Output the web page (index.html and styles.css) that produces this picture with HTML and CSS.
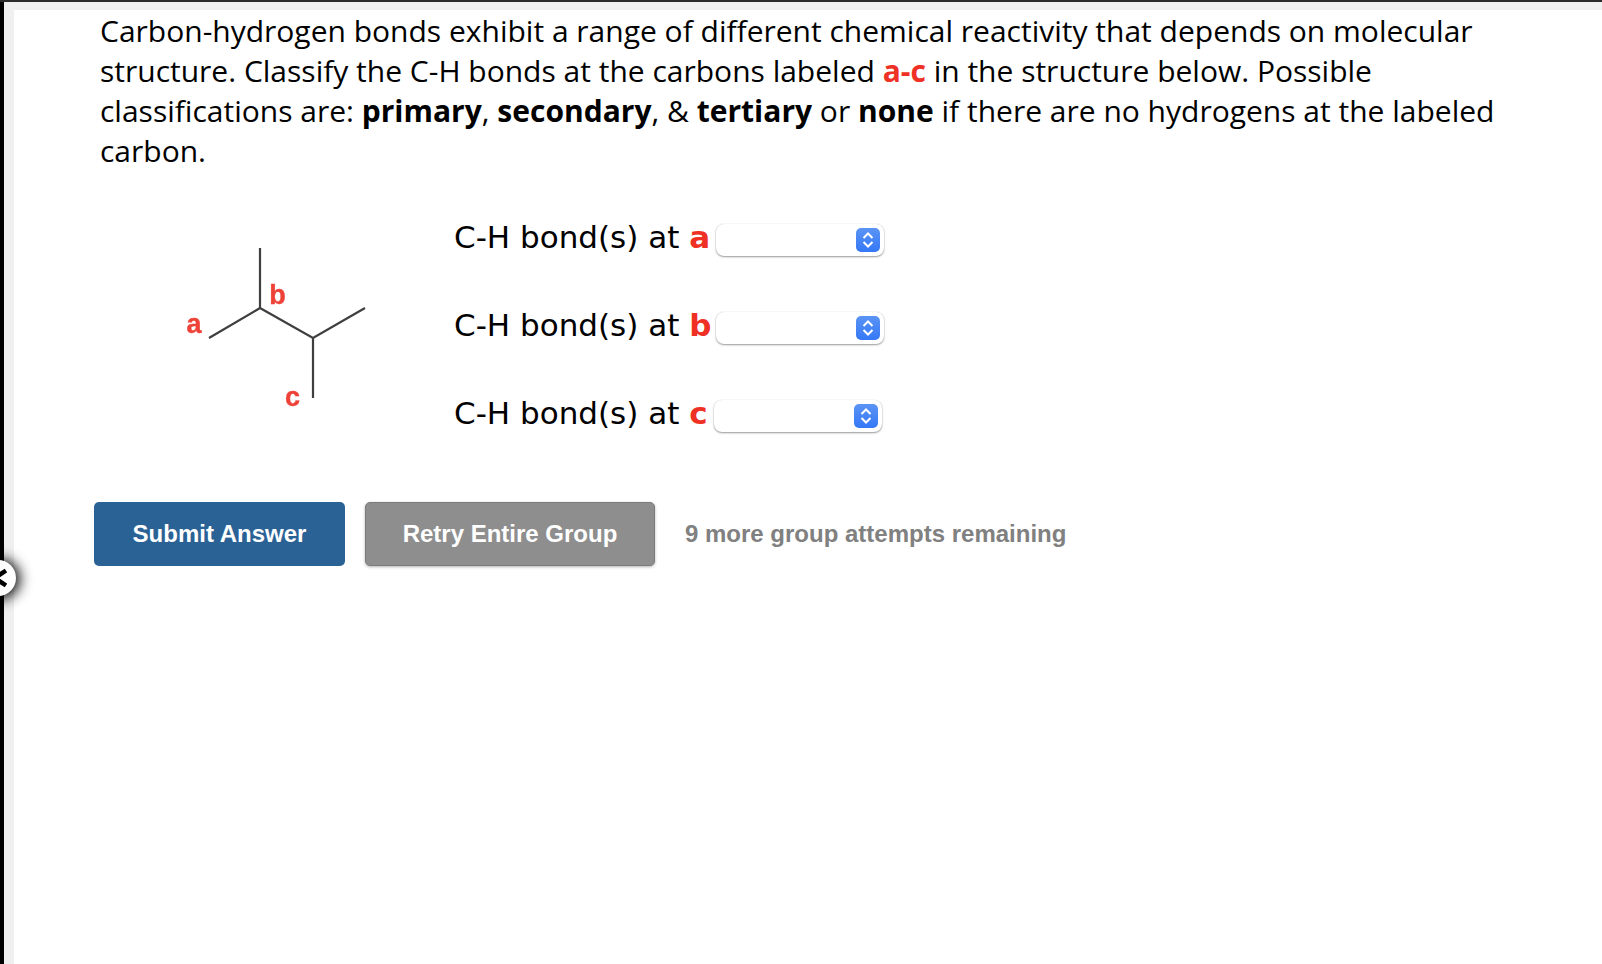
FILE: index.html
```html
<!DOCTYPE html>
<html lang="en">
<head>
<meta charset="utf-8">
<title>C-H bond classification</title>
<link rel="stylesheet" href="styles.css">
</head>
<body>
<div class="topbar"></div>
<div class="shell">
  <div class="rail">
    <div class="handle" aria-hidden="true">
      <svg class="handle-icon" width="14" height="20" viewBox="0 0 14 20"><path d="M13 2.5 L2 10 L13 17.5" fill="none" stroke="#000" stroke-width="4.5"/></svg>
    </div>
  </div>
  <div class="gutter"></div>
  <main class="page">
    <p class="question">Carbon-hydrogen bonds exhibit a range of different chemical reactivity that depends on molecular structure. Classify the C-H bonds at the carbons labeled <b class="red">a-c</b> in the structure below. Possible classifications are: <b>primary</b>, <b>secondary</b>, &amp; <b>tertiary</b> or <b>none</b> if there are no hydrogens at the labeled carbon.</p>
    <div class="problem">
      <svg class="molecule" width="240" height="210" viewBox="0 0 240 210">
        <path d="M49 128 L100 98 L100 38 M100 98 L153 128 L205 98 M153 128 L153 188" fill="none" stroke="#3f3f3f" stroke-width="2.2"/>
        <text class="mol-label" x="34" y="123" text-anchor="middle">a</text>
        <text class="mol-label" x="117.5" y="94" text-anchor="middle">b</text>
        <text class="mol-label" x="132.5" y="196" text-anchor="middle">c</text>
      </svg>
      <div class="answers">
        <div class="answer"><span class="answer-label">C-H bond(s) at <b class="red">a</b></span><span class="select"><span class="stepper"><svg width="12" height="18" viewBox="0 0 12 18"><path d="M1.5 7 L6 2.5 L10.5 7 M1.5 11 L6 15.5 L10.5 11" fill="none" stroke="#fff" stroke-width="2"/></svg></span></span></div>
        <div class="answer"><span class="answer-label label-b">C-H bond(s) at <b class="red">b</b></span><span class="select"><span class="stepper"><svg width="12" height="18" viewBox="0 0 12 18"><path d="M1.5 7 L6 2.5 L10.5 7 M1.5 11 L6 15.5 L10.5 11" fill="none" stroke="#fff" stroke-width="2"/></svg></span></span></div>
        <div class="answer"><span class="answer-label">C-H bond(s) at <b class="red">c</b></span><span class="select"><span class="stepper"><svg width="12" height="18" viewBox="0 0 12 18"><path d="M1.5 7 L6 2.5 L10.5 7 M1.5 11 L6 15.5 L10.5 11" fill="none" stroke="#fff" stroke-width="2"/></svg></span></span></div>
      </div>
    </div>
    <div class="actions">
      <button class="btn submit" type="button">Submit Answer</button>
      <button class="btn retry" type="button">Retry Entire Group</button>
      <span class="attempts">9 more group attempts remaining</span>
    </div>
  </main>
</div>
</body>
</html>
```
FILE: styles.css
```css
* { box-sizing: border-box; }
html, body { margin: 0; height: 100%; overflow: hidden; background: #fff; }
body { display: flex; flex-direction: column; }
.topbar { height: 2px; background: #2b2b2b; flex: none; }
.shell { display: flex; flex: 1; min-height: 0; }
.rail { width: 4px; background: #000; position: relative; flex: none; }
.handle { position: absolute; left: -20px; top: 558px; width: 36px; height: 36px; border-radius: 50%; background: #fff; box-shadow: 2px 1px 13px 2px rgba(0,0,0,.95); display: flex; align-items: center; justify-content: flex-end; padding-right: 9px; z-index: 2; }
.gutter { width: 10px; background: #f0f0f0; flex: none; }
.page { flex: 1; border-top: 8px solid #f0f0f0; padding: 1px 0 0 86px; min-width: 0; }
.question { margin: 0; width: 1400px; font: 30px/40px "Open Sans", sans-serif; color: #000; }
.question b { font-weight: 700; }
.red { color: #ee3124; font-weight: 700; }
.problem { display: flex; margin-top: 39px; }
.molecule { flex: none; margin-left: 60px; filter: blur(.4px); }
.mol-label { font: 700 27px "Liberation Sans", sans-serif; fill: #ee4238; stroke: #ee4238; stroke-width: .4px; }
.answers { display: flex; flex-direction: column; gap: 52px; margin-left: 54px; margin-top: 9px; }
.answer { display: flex; align-items: center; height: 36px; }
.answer-label { font: 31px/36px "DejaVu Sans", sans-serif; color: #000; }
.label-b { margin-right: -1px; }
.select { display: flex; align-items: center; justify-content: flex-end; width: 168px; height: 32px; margin: 5px 0 0 6px; padding-right: 4px; background: #fff; border-radius: 8px; box-shadow: 0 1px 2px rgba(0,0,0,.4), 0 0 1px rgba(0,0,0,.15); }
.stepper { display: flex; align-items: center; justify-content: center; width: 24px; height: 24px; border-radius: 5px; background: linear-gradient(#5b94f5, #3478f6); }
.actions { display: flex; align-items: center; margin-top: 71px; margin-left: -6px; }
.btn { height: 64px; border: 0; border-radius: 5px; color: #fff; font: 700 24px "Liberation Sans", sans-serif; padding: 0; }
.submit { width: 251px; background: #2a6296; }
.retry { width: 290px; margin-left: 20px; background: #8e8e8e; border: 1px solid #7c7c7c; box-shadow: 0 1px 3px rgba(0,0,0,.3); }
.attempts { margin-left: 30px; color: #808080; font: 700 24px "Liberation Sans", sans-serif; }
```
